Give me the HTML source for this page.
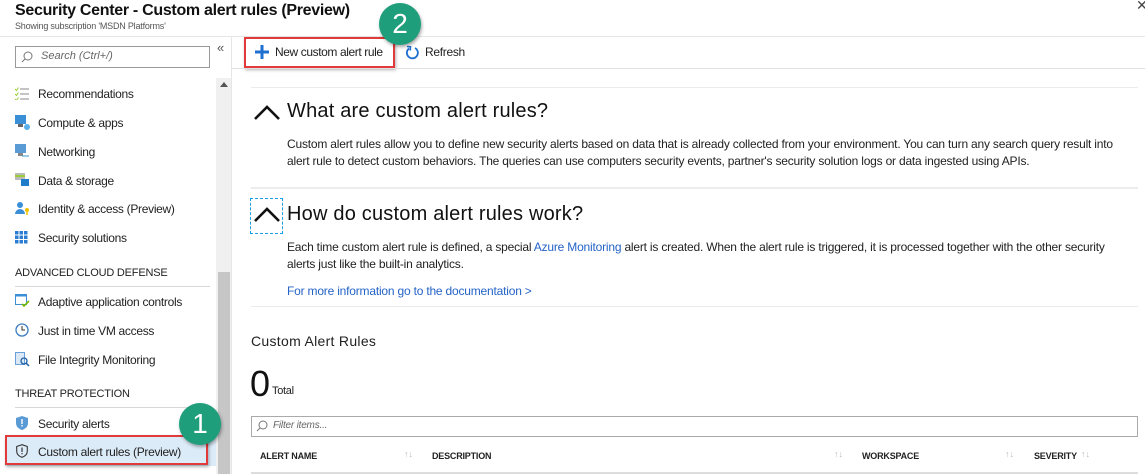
<!DOCTYPE html>
<html><head><meta charset="utf-8"><style>
*{margin:0;padding:0;box-sizing:border-box}
body{width:1145px;height:474px;overflow:hidden;background:#fff;font-family:"Liberation Sans",sans-serif;color:#1f1f1f;position:relative}
.a{position:absolute;white-space:nowrap}
.mi{font-size:12px;letter-spacing:-0.3px;color:#222}
.sec{font-size:11px;letter-spacing:-0.2px;color:#222}
.p{font-size:12px;letter-spacing:-0.2px;color:#222;line-height:17px}
.h{font-size:20px;letter-spacing:0.2px;color:#111}
.th{font-size:9px;font-weight:bold;color:#222;letter-spacing:-0.2px}
.hl{position:absolute;height:1px;background:#e1e1e1}
.circ{position:absolute;width:42px;height:42px;border-radius:50%;background:#1f9e7c;color:#fff;font-size:28px;text-align:center;line-height:42px;box-shadow:1px 2px 3px rgba(0,0,0,.35)}
.arrow{font-size:9px;color:#bbb}
</style></head><body>
<div class="a" style="left:15px;top:2px;font-size:16px;font-weight:bold;letter-spacing:-0.3px;color:#111">Security Center - Custom alert rules (Preview)</div>
<div class="a" style="left:15px;top:21px;font-size:9px;color:#555;letter-spacing:-0.2px">Showing subscription 'MSDN Platforms'</div>
<div class="a" style="left:1136px;top:-3px;font-size:14px;color:#444">✕</div>
<div class="hl" style="left:0;top:36px;width:1145px;background:#e6e6e6"></div>

<!-- sidebar -->
<div class="a" style="left:15px;top:46px;width:195px;height:22px;border:1px solid #999"></div>
<svg class="a" style="left:21px;top:51px" width="12" height="12"><circle cx="7" cy="5" r="4" fill="none" stroke="#777"/><line x1="4" y1="8" x2="1" y2="11" stroke="#777"/></svg>
<div class="a" style="left:41px;top:50px;font-size:11px;font-style:italic;color:#666">Search (Ctrl+/)</div>
<div class="a" style="left:217px;top:40px;font-size:13px;color:#555">«</div>
<div class="a" style="left:216px;top:78px;width:15px;height:396px;background:#f0f0f0"></div>
<div class="a" style="left:218px;top:272px;width:12px;height:202px;background:#c6c6c6"></div>
<div class="a" style="left:220px;top:82px;width:0;height:0;border-left:4px solid transparent;border-right:4px solid transparent;border-bottom:5px solid #555"></div>
<div class="a" style="left:231px;top:37px;width:1px;height:437px;background:#e6e6e6"></div>

<svg class="a" style="left:15px;top:87px" width="14" height="13"><g stroke="#9c3" stroke-width="1"><path d="M0 2l1.5 1.5 2-3M0 7l1.5 1.5 2-3M0 12l1.5 1.5 2-3" fill="none"/></g><g stroke="#888"><line x1="5" y1="2" x2="14" y2="2"/><line x1="5" y1="7" x2="14" y2="7"/><line x1="5" y1="12" x2="14" y2="12"/></g></svg>
<div class="a mi" style="left:38px;top:87px">Recommendations</div>
<svg class="a" style="left:15px;top:115px" width="15" height="15"><rect x="0" y="0" width="11" height="9" fill="#3b8fd6"/><rect x="3" y="9" width="5" height="3" fill="#666"/><circle cx="12" cy="12" r="3" fill="#5ab0e8"/></svg>
<div class="a mi" style="left:38px;top:116px">Compute &amp; apps</div>
<svg class="a" style="left:15px;top:144px" width="15" height="15"><rect x="0" y="0" width="11" height="9" fill="#5a9bd6"/><rect x="3" y="9" width="5" height="3" fill="#888"/><path d="M7 12h7" stroke="#39c" /></svg>
<div class="a mi" style="left:38px;top:145px">Networking</div>
<svg class="a" style="left:15px;top:173px" width="15" height="15"><rect x="0" y="0" width="10" height="7" fill="#bbb"/><rect x="0" y="2" width="10" height="2" fill="#9c3"/><rect x="6" y="6" width="8" height="7" fill="#1e7cc8"/></svg>
<div class="a mi" style="left:38px;top:174px">Data &amp; storage</div>
<svg class="a" style="left:15px;top:201px" width="15" height="15"><circle cx="5" cy="4" r="3" fill="#3b8fd6"/><path d="M0 13a5 5 0 0 1 10 0z" fill="#3b8fd6"/><circle cx="12" cy="9" r="2" fill="#f2c200"/><line x1="12" y1="10" x2="12" y2="14" stroke="#f2c200" stroke-width="1.5"/></svg>
<div class="a mi" style="left:38px;top:202px">Identity &amp; access (Preview)</div>
<svg class="a" style="left:15px;top:231px" width="13" height="13"><g fill="#2b7cd3"><rect x="0" y="0" width="3.5" height="3.5"/><rect x="4.5" y="0" width="3.5" height="3.5"/><rect x="9" y="0" width="3.5" height="3.5"/><rect x="0" y="4.5" width="3.5" height="3.5"/><rect x="4.5" y="4.5" width="3.5" height="3.5"/><rect x="9" y="4.5" width="3.5" height="3.5"/><rect x="0" y="9" width="3.5" height="3.5"/><rect x="4.5" y="9" width="3.5" height="3.5"/><rect x="9" y="9" width="3.5" height="3.5"/></g></svg>
<div class="a mi" style="left:38px;top:231px">Security solutions</div>

<div class="a sec" style="left:15px;top:267px">ADVANCED CLOUD DEFENSE</div>
<div class="hl" style="left:15px;top:286px;width:195px;background:#d8d8d8"></div>
<svg class="a" style="left:15px;top:294px" width="15" height="15"><rect x="0.5" y="0.5" width="11" height="10" fill="#fff" stroke="#3b8fd6"/><rect x="0.5" y="0.5" width="11" height="2" fill="#3b8fd6"/><path d="M7 10l2 2 5-5" stroke="#7ab800" stroke-width="1.6" fill="none"/></svg>
<div class="a mi" style="left:38px;top:295px">Adaptive application controls</div>
<svg class="a" style="left:15px;top:323px" width="15" height="15"><circle cx="7" cy="7" r="6" fill="#fff" stroke="#3b7cc0" stroke-width="1.3"/><path d="M7 3v4h3" stroke="#333" fill="none"/></svg>
<div class="a mi" style="left:38px;top:324px">Just in time VM access</div>
<svg class="a" style="left:15px;top:352px" width="15" height="15"><rect x="0.5" y="0.5" width="9" height="12" fill="#dbe9f7" stroke="#6aa0d8"/><circle cx="9" cy="9" r="3" fill="none" stroke="#1e5ea8" stroke-width="1.3"/><line x1="11" y1="11" x2="14" y2="14" stroke="#1e5ea8" stroke-width="1.5"/></svg>
<div class="a mi" style="left:38px;top:353px">File Integrity Monitoring</div>

<div class="a sec" style="left:15px;top:388px">THREAT PROTECTION</div>
<div class="hl" style="left:15px;top:407px;width:195px;background:#d8d8d8"></div>
<svg class="a" style="left:16px;top:416px" width="13" height="14"><path d="M6 0l6 2v5c0 4-3 6-6 7-3-1-6-3-6-7V2z" fill="#5b9bd5"/><rect x="5.3" y="3" width="1.4" height="5" fill="#fff"/><rect x="5.3" y="9" width="1.4" height="1.4" fill="#fff"/></svg>
<div class="a mi" style="left:38px;top:417px">Security alerts</div>
<div class="a" style="left:5px;top:436px;width:211px;height:30px;background:#dcebf8"></div>
<div class="a" style="left:5px;top:435px;width:203px;height:30px;border:2px solid #e23a3a;box-shadow:1px 2px 3px rgba(0,0,0,.3)"></div>
<svg class="a" style="left:16px;top:444px" width="13" height="14"><path d="M6 0.7l5.3 1.8v4.5c0 3.6-2.6 5.4-5.3 6.3-2.7-.9-5.3-2.7-5.3-6.3V2.5z" fill="none" stroke="#333" stroke-width="1.1"/><rect x="5.4" y="3.5" width="1.2" height="4.5" fill="#333"/><rect x="5.4" y="9" width="1.2" height="1.2" fill="#333"/></svg>
<div class="a mi" style="left:38px;top:445px">Custom alert rules (Preview)</div>
<div class="circ" style="left:179px;top:403px">1</div>

<!-- toolbar -->
<div class="a" style="left:244px;top:37px;width:151px;height:31px;border:2px solid #e23a3a;box-shadow:1px 2px 3px rgba(0,0,0,.3)"></div>
<svg class="a" style="left:255px;top:45px" width="14" height="14"><rect x="5.5" y="0" width="3" height="14" fill="#1e6fd0"/><rect x="0" y="5.5" width="14" height="3" fill="#1e6fd0"/></svg>
<div class="a" style="left:275px;top:45px;font-size:12px;letter-spacing:-0.4px;color:#222">New custom alert rule</div>
<svg class="a" style="left:405px;top:44px" width="14" height="16"><path d="M4 4.5A5.5 5.5 0 1 0 10 4" fill="none" stroke="#1e6fd0" stroke-width="1.8"/><path d="M2 2.5l3.5 0.3-0.3 3.7" fill="none" stroke="#1e6fd0" stroke-width="1.6"/></svg>
<div class="a" style="left:425px;top:45px;font-size:12px;letter-spacing:-0.3px;color:#222">Refresh</div>
<div class="circ" style="left:379px;top:3px">2</div>
<div class="hl" style="left:232px;top:68px;width:913px"></div>

<!-- content -->
<div class="hl" style="left:251px;top:87px;width:887px;background:#ececec"></div>
<svg class="a" style="left:253px;top:104px" width="28" height="16"><path d="M2 15L14 3l12 12" fill="none" stroke="#111" stroke-width="2.6"/></svg>
<div class="a h" style="left:287px;top:100px">What are custom alert rules?</div>
<div class="a p" style="left:287px;top:136px">Custom alert rules allow you to define new security alerts based on data that is already collected from your environment. You can turn any search query result into<br>alert rule to detect custom behaviors. The queries can use computers security events, partner's security solution logs or data ingested using APIs.</div>
<div class="a" style="left:251px;top:187px;width:887px;height:2px;background:#ececec"></div>
<div class="a" style="left:250px;top:198px;width:33px;height:36px;border:1px dashed #1aa0e0"></div>
<svg class="a" style="left:253px;top:206px" width="28" height="16"><path d="M2 15L14 3l12 12" fill="none" stroke="#111" stroke-width="2.6"/></svg>
<div class="a h" style="left:287px;top:203px">How do custom alert rules work?</div>
<div class="a p" style="left:287px;top:239px">Each time custom alert rule is defined, a special <span style="color:#2463c8">Azure Monitoring</span> alert is created. When the alert rule is triggered, it is processed together with the other security<br>alerts just like the built-in analytics.</div>
<div class="a p" style="left:287px;top:283px;color:#2463c8">For more information go to the documentation &gt;</div>
<div class="hl" style="left:251px;top:306px;width:887px;background:#ececec"></div>

<div class="a" style="left:251px;top:333px;font-size:14px;letter-spacing:0.3px;color:#222">Custom Alert Rules</div>
<div class="a" style="left:250px;top:363px;font-size:36px;color:#111;letter-spacing:-1px">0</div>
<div class="a" style="left:272px;top:385px;font-size:11px;letter-spacing:-0.3px;color:#222">Total</div>
<div class="a" style="left:251px;top:416px;width:887px;height:21px;border:1px solid #aaa"></div>
<svg class="a" style="left:256px;top:420px" width="12" height="12"><circle cx="7" cy="5" r="4" fill="none" stroke="#777"/><line x1="4" y1="8" x2="1" y2="11" stroke="#777"/></svg>
<div class="a" style="left:273px;top:420px;font-size:10px;font-style:italic;color:#666;letter-spacing:-0.2px">Filter items...</div>
<div class="a th" style="left:260px;top:451px">ALERT NAME</div>
<div class="a arrow" style="left:404px;top:449px">↑↓</div>
<div class="a th" style="left:432px;top:451px">DESCRIPTION</div>
<div class="a arrow" style="left:834px;top:449px">↑↓</div>
<div class="a th" style="left:862px;top:451px">WORKSPACE</div>
<div class="a arrow" style="left:1005px;top:449px">↑↓</div>
<div class="a th" style="left:1034px;top:451px">SEVERITY</div>
<div class="a arrow" style="left:1081px;top:449px">↑↓</div>
<div class="hl" style="left:251px;top:472px;width:887px;height:2px;background:#ddd"></div>
</body></html>
